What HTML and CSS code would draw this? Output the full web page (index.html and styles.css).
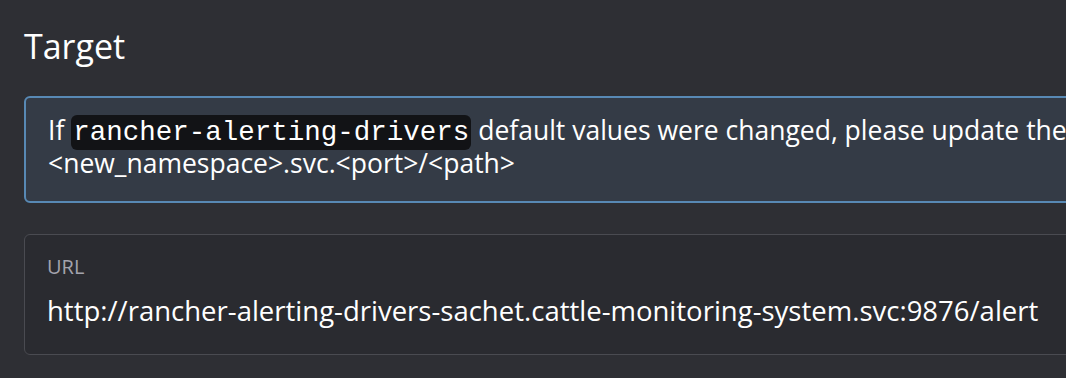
FILE: index.html
```html
<!DOCTYPE html>
<html lang="en">
<head>
    <meta charset="UTF-8">
    <meta name="viewport" content="width=device-width, initial-scale=1.0">
    <title>Target</title>
    <link rel="stylesheet" href="styles.css">
</head>
<body>

    <div class="page">
        <h2 class="title">Target</h2>

        <div class="banner">
            If <code>rancher-alerting-drivers</code> default values were changed, please update the url below in the format http://&lt;new_service_name&gt;.<br>
            &lt;new_namespace&gt;.svc.&lt;port&gt;/&lt;path&gt;
        </div>

        <div class="labeled-input">
            <label for="url">URL</label>
            <input type="text" id="url" value="http://rancher-alerting-drivers-sachet.cattle-monitoring-system.svc:9876/alert">
        </div>
    </div>

</body>
</html>
```

FILE: styles.css
```css
body {
    margin: 0;
    background-color: #2e2f34;
    color: #ffffff;
    font-family: "Open Sans", "Noto Sans", sans-serif;
    overflow: hidden;
}
.page {
    width: 1400px;
    padding: 24px 0 0 24px;
}
.title {
    margin: 0 0 28px;
    font-size: 34px;
    font-weight: 500;
    line-height: 44px;
}
.banner {
    padding: 17px 22px 22px;
    background-color: #343b46;
    border: 2px solid #5889b4;
    border-radius: 6px;
    font-size: 26.5px;
    line-height: 31px;
    white-space: nowrap;
}
.banner code {
    padding: 2px 2px;
    background-color: #121316;
    border-radius: 6px;
    font-family: "Liberation Mono", monospace;
    font-size: 27.5px;
}
.labeled-input {
    margin-top: 31px;
    padding: 19px 22px 22px;
    background-color: #2a2b30;
    border: 1px solid #4a4b51;
    border-radius: 6px;
}
.labeled-input label {
    display: block;
    margin-bottom: 10px;
    color: #a3a3ad;
    font-size: 20px;
    line-height: 26px;
}
.labeled-input input {
    width: 100%;
    padding: 0;
    border: none;
    background: transparent;
    color: #ffffff;
    font-family: inherit;
    font-size: 27.5px;
    line-height: 42px;
    outline: none;
}
```
